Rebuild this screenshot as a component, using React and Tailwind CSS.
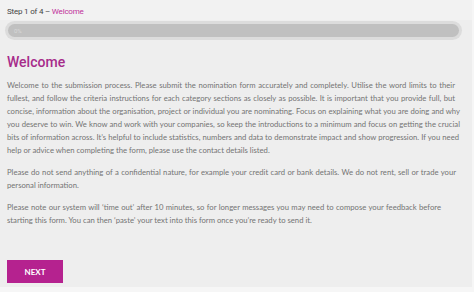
import React from "react";

// each line: [text, width to justify to (null = natural, last line of a paragraph)]
const paras = [
  [
    ["Welcome to the submission process. Please submit the nomination form accurately and completely. Utilise the word limits to their", 448],
    ["fullest, and follow the criteria instructions for each category sections as closely as possible. It is important that you provide full, but", 448],
    ["concise, information about the organisation, project or individual you are nominating. Focus on explaining what you are doing and why", 453],
    ["you deserve to win. We know and work with your companies, so keep the introductions to a minimum and focus on getting the crucial", 453],
    ["bits of information across. It\u2019s helpful to include statistics, numbers and data to demonstrate impact and show progression. If you need", 452],
    ["help or advice when completing the form, please use the contact details listed.", null],
  ],
  [
    ["Please do not send anything of a confidential nature, for example your credit card or bank details. We do not rent, sell or trade your", 449],
    ["personal information.", null],
  ],
  [
    ["Please note our system will \u2018time out\u2019 after 10 minutes, so for longer messages you may need to compose your feedback before", 434],
    ["starting this form. You can then \u2018paste\u2019 your text into this form once you\u2019re ready to send it.", null],
  ],
];

const App = () => {
  return (
    <div className="w-[474px] h-[292px] bg-[#f6f6f6] overflow-hidden">
      <div className="w-[472px] h-[287px] bg-[#eeeeee]">
        <div className="bg-[#f2f2f2] px-[7px] pt-[5px] pb-[1px] font-['Roboto',sans-serif]">
          <div className="text-[8px] leading-[14px] text-[#444] tracking-[-0.2px]">
            Step 1 of 4 – <span className="text-[#c0309a]">Welcome</span>
          </div>
        </div>
        <div className="px-[5px] pt-[1px] bg-[#eeeeee]">
          <div className="h-[19px] w-[457px] rounded-full bg-[#dcdcdc] p-[3px]">
            <div className="h-full rounded-full bg-[#c0c0c0] flex items-center px-[6px]">
              <span className="text-[6px] text-[#d8d8d8] font-['Roboto',sans-serif]">0%</span>
            </div>
          </div>
        </div>
        <div className="px-[7px] pt-[14px]">
          <h1 className="font-['Roboto',sans-serif] font-medium text-[14px] leading-[16px] text-[#a62b8a]">
            Welcome
          </h1>
          <div className="mt-[9px] flex flex-col gap-[9px] font-['Lato',sans-serif] text-[7.7px] leading-[13px] text-[#747474]">
            {paras.map((p, i) => (
              <p key={i}>
                {p.map(([l, w], j) =>
                  w ? (
                    <span
                      key={j}
                      className="block whitespace-nowrap text-justify [text-align-last:justify]"
                      style={{ width: w }}
                    >
                      {l}
                    </span>
                  ) : (
                    <span key={j} className="block whitespace-nowrap">
                      {l}
                    </span>
                  )
                )}
              </p>
            ))}
          </div>
          <button className="mt-[33px] w-[56px] h-[23px] bg-[#b5228f] text-white text-[8px] font-bold font-['Lato',sans-serif] flex items-center justify-center">
            NEXT
          </button>
        </div>
      </div>
    </div>
  );
};

export default App;
